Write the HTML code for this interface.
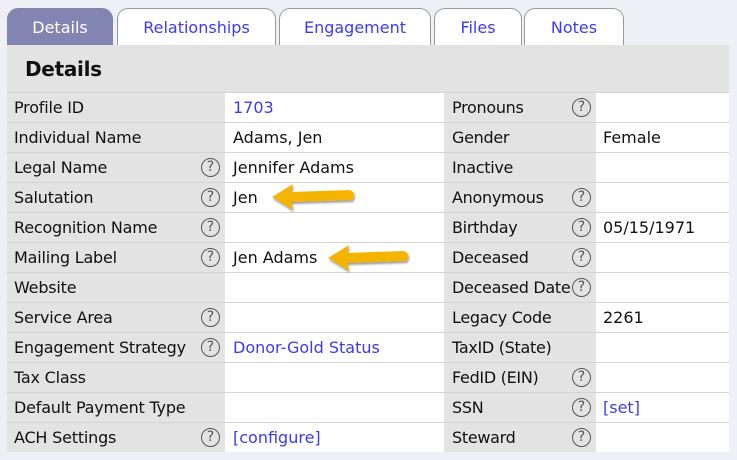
<!DOCTYPE html>
<html><head><style>
body{margin:0;width:737px;height:460px;background:#eff0f5;font-family:"DejaVu Sans","Liberation Sans",sans-serif;font-size:16px;position:relative;overflow:hidden}
.tab{position:absolute;top:8px;height:37px;box-sizing:border-box;border:1px solid #999;border-bottom:none;border-radius:11px 11px 0 0;background:#fff;color:#3b3bf5;text-align:center;line-height:38px;font-size:16px}
.tab.a{background:#8284b2;color:#fff;border-color:#8284b2}
.box{position:absolute;left:7px;top:45px;width:722px;height:407px;background:#e3e3e3}
h1{position:absolute;left:25px;top:57px;margin:0;font-size:20px;font-weight:bold;color:#111;letter-spacing:-0.3px}
.r{position:absolute;left:7px;width:722px;height:30px;border-top:1px solid #d4d4d4;box-sizing:border-box}
.c{position:absolute;top:0;height:29px;line-height:30px;color:#111;white-space:nowrap}
.v{background:#fff}
.l{color:#3b3bf5}
.q{position:absolute;top:5px;width:19px;height:19px;border:1.4px solid #555;border-radius:50%;box-sizing:border-box;font-size:14px;line-height:17px;text-align:center;color:#555}
</style></head><body>
<div class="tab a" style="left:7px;width:106px">Details</div>
<div class="tab" style="left:117px;width:159px">Relationships</div>
<div class="tab" style="left:279px;width:152px">Engagement</div>
<div class="tab" style="left:434px;width:88px">Files</div>
<div class="tab" style="left:524px;width:100px">Notes</div>
<div class="box"></div>
<h1>Details</h1>
<div id="rows"></div>
<script>
var d=[["Profile ID",0,"1703",1,"Pronouns",1,""],["Individual Name",0,"Adams, Jen",0,"Gender",0,"Female"],["Legal Name",1,"Jennifer Adams",0,"Inactive",0,""],["Salutation",1,"Jen",0,"Anonymous",1,""],["Recognition Name",1,"",0,"Birthday",1,"05/15/1971"],["Mailing Label",1,"Jen Adams",0,"Deceased",1,""],["Website",0,"",0,"Deceased Date",1,""],["Service Area",1,"",0,"Legacy Code",0,"2261"],["Engagement Strategy",1,"Donor-Gold Status",1,"TaxID (State)",0,""],["Tax Class",0,"",0,"FedID (EIN)",1,""],["Default Payment Type",0,"",0,"SSN",1,"[set]"],["ACH Settings",1,"[configure]",1,"Steward",1,""]];
var h="";d.forEach(function(r,i){var y=92+i*30;var rl=(r[6]=="[set]");
h+='<div class="r" style="top:'+y+'px">'+
'<div class="c" style="left:7px;letter-spacing:-0.2px">'+r[0]+'</div>'+(r[1]?'<div class="q" style="left:194px">?</div>':'')+
'<div class="c v'+(r[3]?' l':'')+'" style="left:218px;width:219px;padding-left:8px;box-sizing:border-box">'+r[2]+'</div>'+
'<div class="c" style="left:445px;letter-spacing:-0.3px">'+r[4]+'</div>'+(r[5]?'<div class="q" style="left:565px">?</div>':'')+
'<div class="c v'+(rl?' l':'')+'" style="left:589px;width:133px;padding-left:7px;box-sizing:border-box">'+r[6]+'</div></div>';});
document.getElementById("rows").innerHTML=h;
</script>
<svg style="position:absolute;left:0;top:0" width="737" height="460">
<defs><filter id="s"><feDropShadow dx="1" dy="2" stdDeviation="1" flood-opacity="0.4"/></filter></defs>
<g fill="#f5b400" filter="url(#s)">
<path d="M272,197 L293,184 L291,192 L350,190 Q357,193 352,200 L291,202 L293,210 Z"/>
<path d="M328,258 L349,245 L347,253 L404,251 Q411,254 406,261 L347,263 L349,271 Z"/>
</g></svg>
</body></html>
